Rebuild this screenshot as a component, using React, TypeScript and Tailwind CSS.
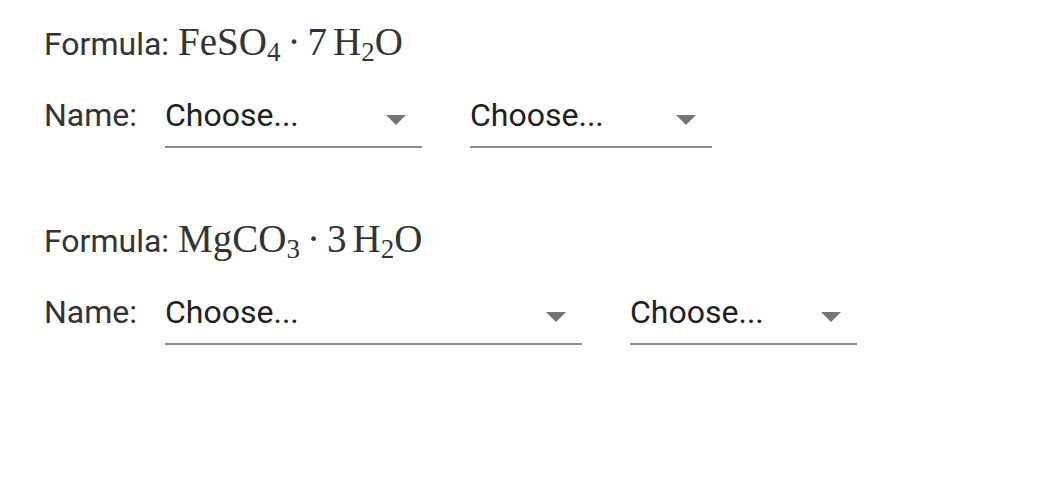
import React from 'react'

type Part = { t: string; sub?: boolean; gap?: string }

const questions: { formula: Part[]; widths: [number, number] }[] = [
  {
    formula: [
      { t: 'FeSO' },
      { t: '4', sub: true },
      { t: '·', gap: 'mx-[7px]' },
      { t: '7' },
      { t: 'H', gap: 'ml-[6px]' },
      { t: '2', sub: true },
      { t: 'O' },
    ],
    widths: [257, 242],
  },
  {
    formula: [
      { t: 'MgCO' },
      { t: '3', sub: true },
      { t: '·', gap: 'mx-[7px]' },
      { t: '3' },
      { t: 'H', gap: 'ml-[6px]' },
      { t: '2', sub: true },
      { t: 'O' },
    ],
    widths: [417, 227],
  },
]

function Formula({ parts }: { parts: Part[] }) {
  return (
    <span className="ml-[9px] text-[39px] leading-[38px] text-[#333]" style={{ fontFamily: '"Liberation Serif", serif' }}>
      {parts.map((p, i) =>
        p.sub ? (
          <sub key={i} className="relative top-[6px] align-baseline text-[27px]">{p.t}</sub>
        ) : (
          <span key={i} className={p.gap}>{p.t}</span>
        )
      )}
    </span>
  )
}

function Select({ width }: { width: number }) {
  return (
    <div className="flex justify-between border-b-2 border-[#8c8c8c] pb-[12px] pr-4" style={{ width }}>
      <span className="text-[#212121]">Choose...</span>
      <svg width="20" height="10" viewBox="0 0 20 10" className="mt-[19px]">
        <path d="M0 0h20L10 10z" fill="#757575" />
      </svg>
    </div>
  )
}

export default function App() {
  return (
    <div className="min-h-[496px] bg-white px-[44px] pt-[23px] text-[32px] leading-[38px]" style={{ fontFamily: 'Roboto, sans-serif' }}>
      {questions.map((q, i) => (
        <div key={i} className={i > 0 ? 'mt-[72px]' : ''}>
          <div className="flex items-baseline">
            <span className="text-[#333]">Formula:</span>
            <Formula parts={q.formula} />
          </div>
          <div className="mt-[33px] flex items-start">
            <span className="w-[121px] shrink-0 text-[#333]">Name:</span>
            <div className="flex gap-12">
              <Select width={q.widths[0]} />
              <Select width={q.widths[1]} />
            </div>
          </div>
        </div>
      ))}
    </div>
  )
}
